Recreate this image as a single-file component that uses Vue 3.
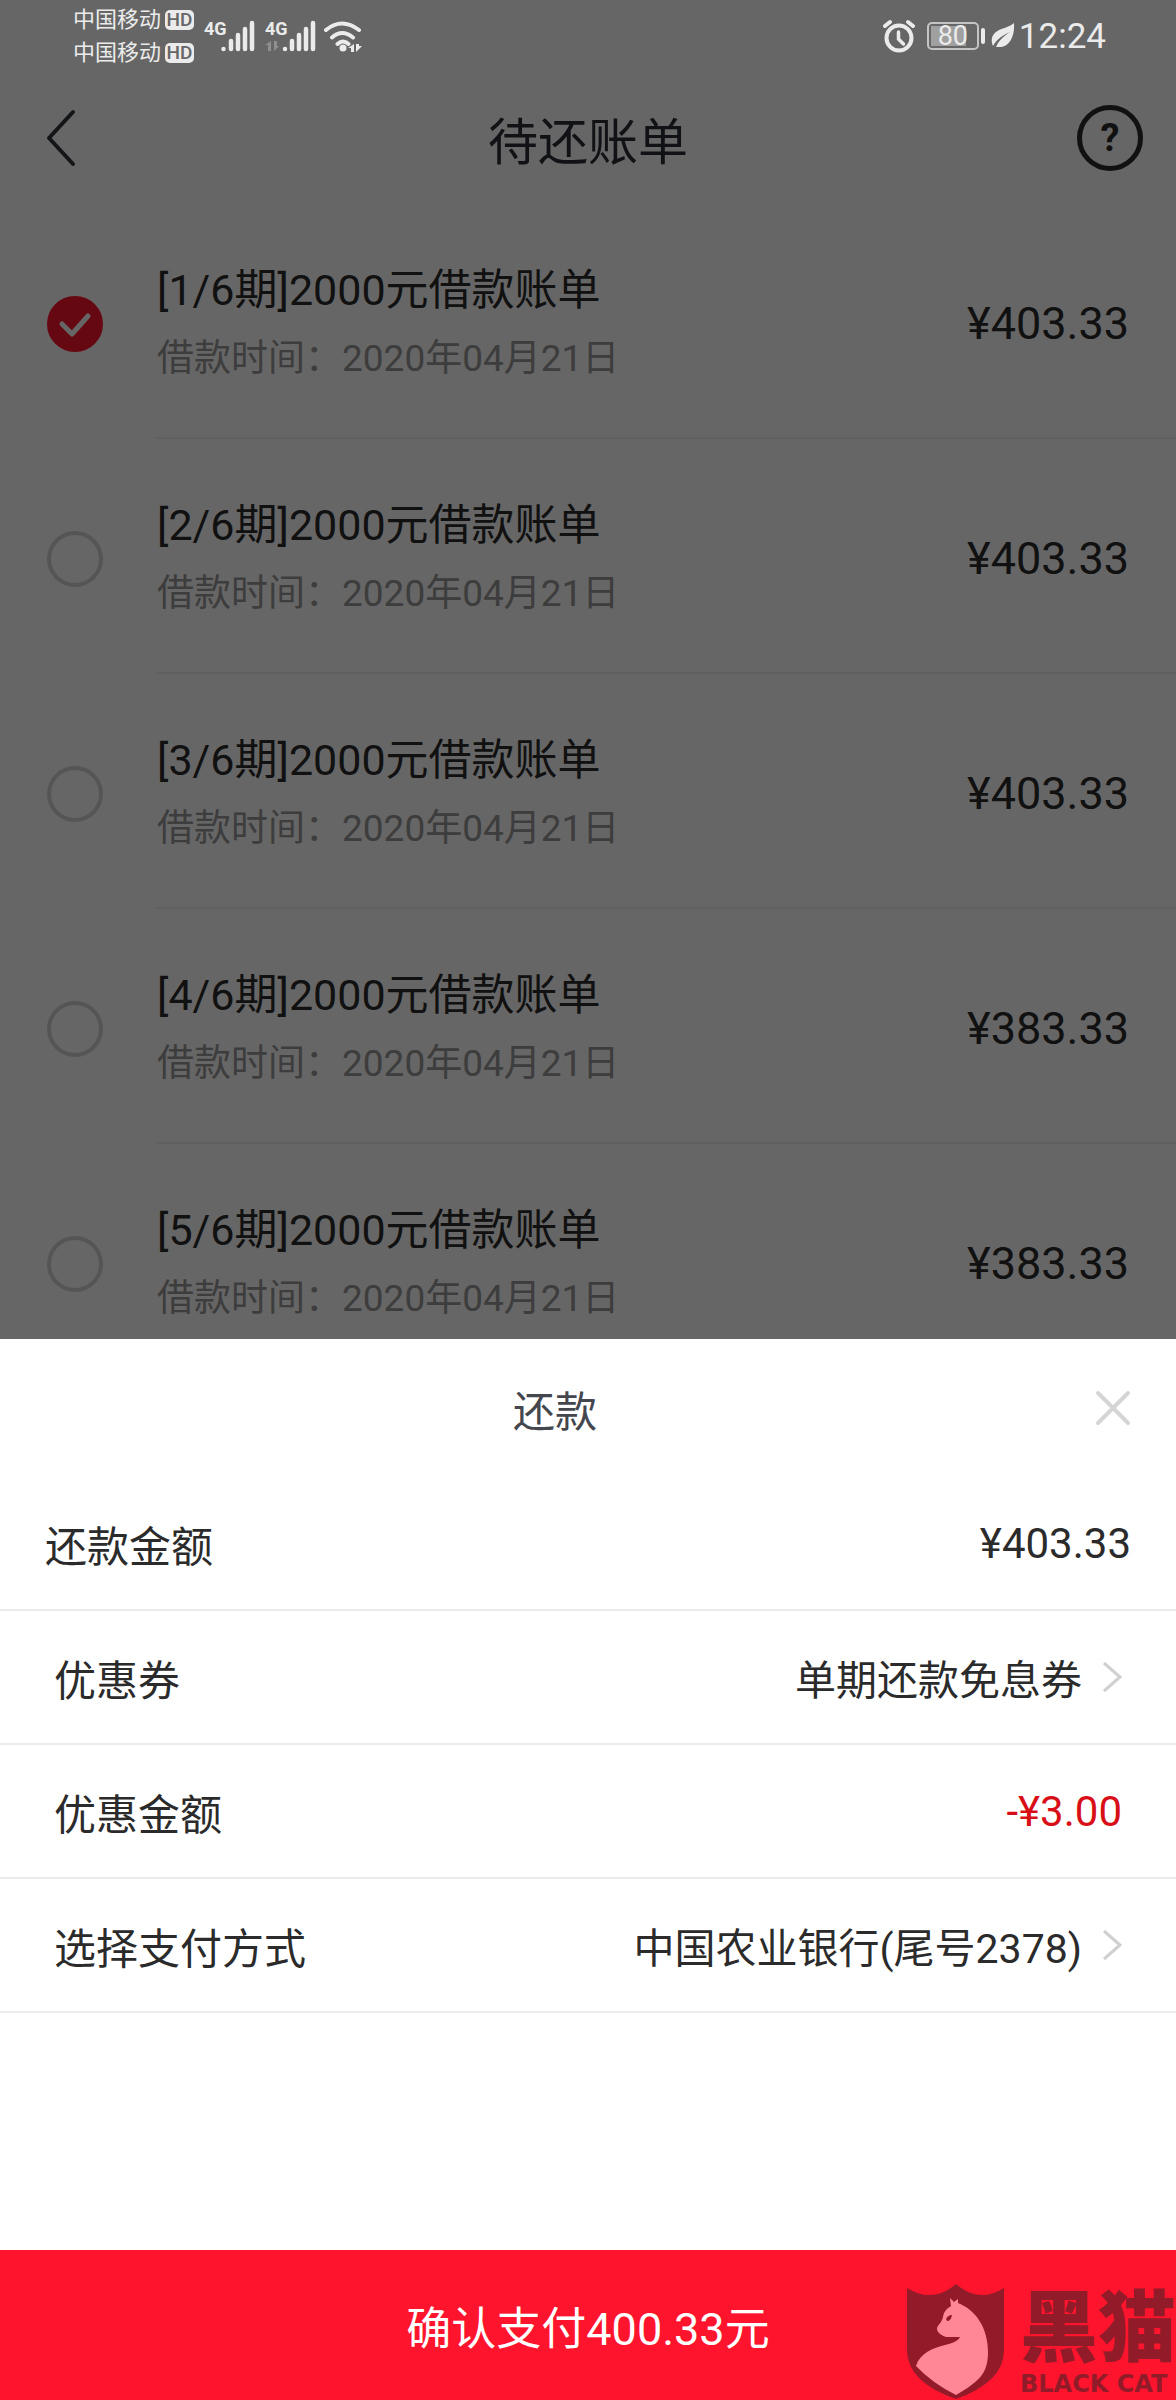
<template>
  <div class="page">
    <div class="status-bar">
      <div class="carriers">
        <div v-for="n in 2" :key="n" class="carrier">
          <span>中国移动</span>
          <span class="hd">HD</span>
        </div>
      </div>
      <svg class="signals" width="160" height="40" viewBox="0 0 160 40">
        <g fill="none" stroke="#ebebeb" stroke-width="4.500" stroke-linecap="round">
          <path d="M19.500 33v0.010M27 33v-8M34 33v-14M41 33v-20M48 33v-26" />
          <path d="M81 33v0.010M88 33v-8M95 33v-14M102 33v-20M109 33v-26" />
          <path d="M122 14q16-13 33 0M128 21.500q10-9 21 0M133.500 28q5.500-5 11 0" stroke-width="4" />
        </g>
        <text x="0" y="19">4G</text>
        <text x="61" y="19">4G</text>
        <path fill="#8f8f8f" d="M67 25v10h-3v-6h-3zM70 25v10l5-5h-2v-5z" />
        <circle cx="139" cy="32" r="3.500" fill="#ebebeb" />
        <path fill="#ebebeb" d="M150 28v8h-3v-4h-3zM152 28v8l6-6h-3v-2z" />
      </svg>
      <div class="status-right">
        <svg width="32" height="34" viewBox="0 0 32 34" fill="none" stroke="#ebebeb">
          <circle cx="16" cy="19" r="12.500" stroke-width="4" />
          <path d="M15.500 13v7l5 5" stroke-width="3.500" stroke-linecap="round" />
          <path d="M2 7l5-4M30 7l-5-4" stroke-width="4" stroke-linecap="round" />
        </svg>
        <div class="battery">80</div>
        <svg width="24" height="26" viewBox="0 0 24 26">
          <path fill="#ebebeb" d="M23 0C24 14 18 24 9 24H5C8 17 13 13 19 9 12 12 6 16 2 23 0 18 0 13 5 9 10 5 17 5 23 0z" />
        </svg>
        <time>12:24</time>
      </div>
    </div>

    <header class="nav">
      <button class="icon-btn" aria-label="返回">
        <svg width="32" height="60" viewBox="0 0 32 60">
          <path d="M28 4L4 30l24 26" fill="none" stroke="#34363e" stroke-width="4" stroke-linecap="round" stroke-linejoin="round" />
        </svg>
      </button>
      <h1>待还账单</h1>
      <button class="help" aria-label="帮助">?</button>
    </header>

    <ul class="bills">
      <li v-for="bill in bills" :key="bill.period">
        <label class="bill">
          <span class="check">
            <input v-model="bill.checked" type="checkbox" />
            <svg v-if="bill.checked" width="56" height="56" viewBox="0 0 56 56">
              <path d="M15 28l10 10 16-18" fill="none" stroke="#fff" stroke-width="5" stroke-linecap="round" stroke-linejoin="round" />
            </svg>
          </span>
          <span class="bill-body">
            <span class="bill-info">
              <span class="bill-title">[{{ bill.period }}/6期]2000元借款账单</span>
              <span class="bill-date">借款时间：2020年04月21日</span>
            </span>
            <span class="bill-amount">¥{{ bill.amount }}</span>
          </span>
        </label>
      </li>
    </ul>

    <div class="mask"></div>

    <section class="sheet">
      <div class="sheet-head">
        <h2>还款</h2>
        <button aria-label="关闭">
          <svg width="36" height="36" viewBox="0 0 36 36">
            <path d="M3 3l30 30M33 3L3 33" stroke="#d5d5d5" stroke-width="4" stroke-linecap="round" />
          </svg>
        </button>
      </div>

      <div class="row total">
        <span>还款金额</span>
        <span>¥403.33</span>
      </div>
      <button class="row">
        <span>优惠券</span>
        <span class="choice">
          单期还款免息券
          <svg width="20" height="34" viewBox="0 0 20 34">
            <path d="M2 3l16 14L2 31" fill="none" stroke="#d0d0d0" stroke-width="3" />
          </svg>
        </span>
      </button>
      <div class="row">
        <span>优惠金额</span>
        <span class="discount">-¥3.00</span>
      </div>
      <button class="row">
        <span>选择支付方式</span>
        <span class="choice">
          中国农业银行(尾号2378)
          <svg width="20" height="34" viewBox="0 0 20 34">
            <path d="M2 3l16 14L2 31" fill="none" stroke="#d0d0d0" stroke-width="3" />
          </svg>
        </span>
      </button>

      <button class="confirm">确认支付400.33元</button>

      <div class="watermark">
        <svg width="98" height="116" viewBox="0 0 98 116">
          <path fill="#911b28" d="M0 4q26 16 49-4 23 20 48 4v62q0 32-48 49Q0 98 0 66z" />
          <path fill="#ff8796" d="M43 14l4 4 4-3v4c18 7 30 25 30 49 0 21-8 29-32 43Q25 99 9 82c4-13 17-18 29-21 8-2 13-4 15-8H39c-3-1-9-4-9-8s5-6 6-12c1-5 3-8 8-11z" />
          <path fill="#911b28" d="M39 35q2-4 6-4-1 6-5 6z" />
        </svg>
        <div class="watermark-text">
          <span class="cn">黑猫</span>
          <span class="en">BLACK CAT</span>
        </div>
      </div>
    </section>
  </div>
</template>

<script setup>
import { ref } from 'vue'

const bills = ref([
  { period: 1, amount: '403.33', checked: true },
  { period: 2, amount: '403.33', checked: false },
  { period: 3, amount: '403.33', checked: false },
  { period: 4, amount: '383.33', checked: false },
  { period: 5, amount: '383.33', checked: false }
])
</script>

<style>
body {
  margin: 0;
}
</style>

<style scoped>
.page {
  position: relative;
  min-height: 100vh;
  overflow: hidden;
  background: #fff;
  color: #2b2b2b;
  font-family: Roboto, "Noto Sans CJK SC", sans-serif;
}

h1,
h2,
ul {
  margin: 0;
  padding: 0;
  font-weight: 400;
  list-style: none;
}

button {
  padding: 0;
  border: 0;
  background: none;
  color: inherit;
  font: inherit;
  cursor: pointer;
}

svg {
  display: block;
}

/* status bar stays bright above the mask */
.status-bar {
  position: relative;
  z-index: 2;
  display: flex;
  align-items: center;
  box-sizing: border-box;
  height: 72px;
  padding: 0 70px 0 73px;
  color: #ebebeb;
}

.carrier {
  display: flex;
  align-items: center;
  gap: 4px;
  height: 33px;
  font-size: 22px;
  line-height: 30px;
}

.hd {
  width: 29px;
  border-radius: 5px;
  background: #ebebeb;
  color: #666;
  font-size: 19px;
  font-weight: 500;
  line-height: 20px;
  text-align: center;
}

.signals {
  margin-left: 10px;
}

.signals text {
  fill: #ebebeb;
  font-size: 18px;
  font-weight: 700;
}

.status-right {
  display: flex;
  align-items: center;
  gap: 4px;
  margin-left: auto;
}

.battery {
  position: relative;
  box-sizing: border-box;
  width: 52px;
  height: 28px;
  margin: 0 8px;
  border: 2px solid #c4c4c4;
  border-radius: 5px;
  background: linear-gradient(90deg, #a0a0a0 80%, transparent 80%) 2px 2px / 44px 20px no-repeat;
  font-size: 27px;
  line-height: 24px;
  text-align: center;
}

.battery::after {
  content: "";
  position: absolute;
  top: 4px;
  right: -8px;
  width: 4px;
  height: 16px;
  border-radius: 2px;
  background: #ebebeb;
}

time {
  font-size: 35px;
}

.nav {
  display: flex;
  align-items: center;
  justify-content: space-between;
  height: 132px;
  padding: 0 33px;
}

.icon-btn {
  box-sizing: border-box;
  width: 66px;
  padding-left: 12px;
}

h1 {
  color: #2b2d35;
  font-size: 50px;
}

.help {
  box-sizing: border-box;
  width: 66px;
  height: 66px;
  border: 5px solid #2b2b2b;
  border-radius: 50%;
  font-size: 38px;
  font-weight: 700;
}

.bill {
  display: flex;
  height: 235px;
}

.check {
  display: grid;
  place-items: center;
  width: 56px;
  margin: 0 54px 0 47px;
  padding-top: 4px;
}

.check input,
.check svg {
  grid-area: 1 / 1;
}

.check input {
  appearance: none;
  box-sizing: border-box;
  width: 56px;
  height: 56px;
  margin: 0;
  border: 4px solid #d5d5d5;
  border-radius: 50%;
}

.check input:checked {
  border-color: #ff142d;
  background: #ff142d;
}

.bill-body {
  flex: 1;
  display: flex;
  align-items: center;
  justify-content: space-between;
  padding: 6px 47px 0 0;
  border-bottom: 2px solid #f0f0f0;
}

.bill-info {
  display: flex;
  flex-direction: column;
}

.bill-title {
  font-size: 43px;
  line-height: 70px;
}

.bill-date {
  color: #999;
  font-size: 37px;
  line-height: 68px;
}

.bill-amount {
  font-size: 45px;
}

.mask {
  position: absolute;
  inset: 0;
  z-index: 1;
  background: rgba(0, 0, 0, 0.6);
}

.sheet {
  position: absolute;
  right: 0;
  bottom: 0;
  left: 0;
  z-index: 3;
  background: #fff;
  font-size: 42px;
}

.sheet-head {
  display: flex;
  align-items: center;
  height: 138px;
  padding: 0 45px 0 15px;
}

h2 {
  flex: 1;
  color: #45474e;
  font-size: 42px;
  text-align: center;
}

.row {
  display: flex;
  align-items: center;
  justify-content: space-between;
  box-sizing: border-box;
  width: 100%;
  height: 134px;
  padding: 0 54px;
  border-bottom: 2px solid #ebebeb;
}

.row.total {
  padding: 0 45px;
}

.choice {
  display: flex;
  align-items: center;
  gap: 20px;
  font-size: 41px;
}

.discount {
  color: #d80f16;
}

.confirm {
  width: 100%;
  height: 150px;
  margin-top: 237px;
  background: #ff142d;
  color: #fff;
  font-size: 45px;
}

.watermark {
  position: absolute;
  right: 0;
  bottom: 0;
  display: flex;
  gap: 15px;
  color: #911b28;
  pointer-events: none;
}

.watermark-text {
  display: flex;
  flex-direction: column;
  justify-content: flex-end;
}

.cn {
  font-size: 78px;
  font-weight: 900;
  line-height: 76px;
}

.en {
  font-family: "DejaVu Sans", sans-serif;
  font-size: 24px;
  font-weight: 700;
  line-height: 32px;
  white-space: nowrap;
}
</style>
